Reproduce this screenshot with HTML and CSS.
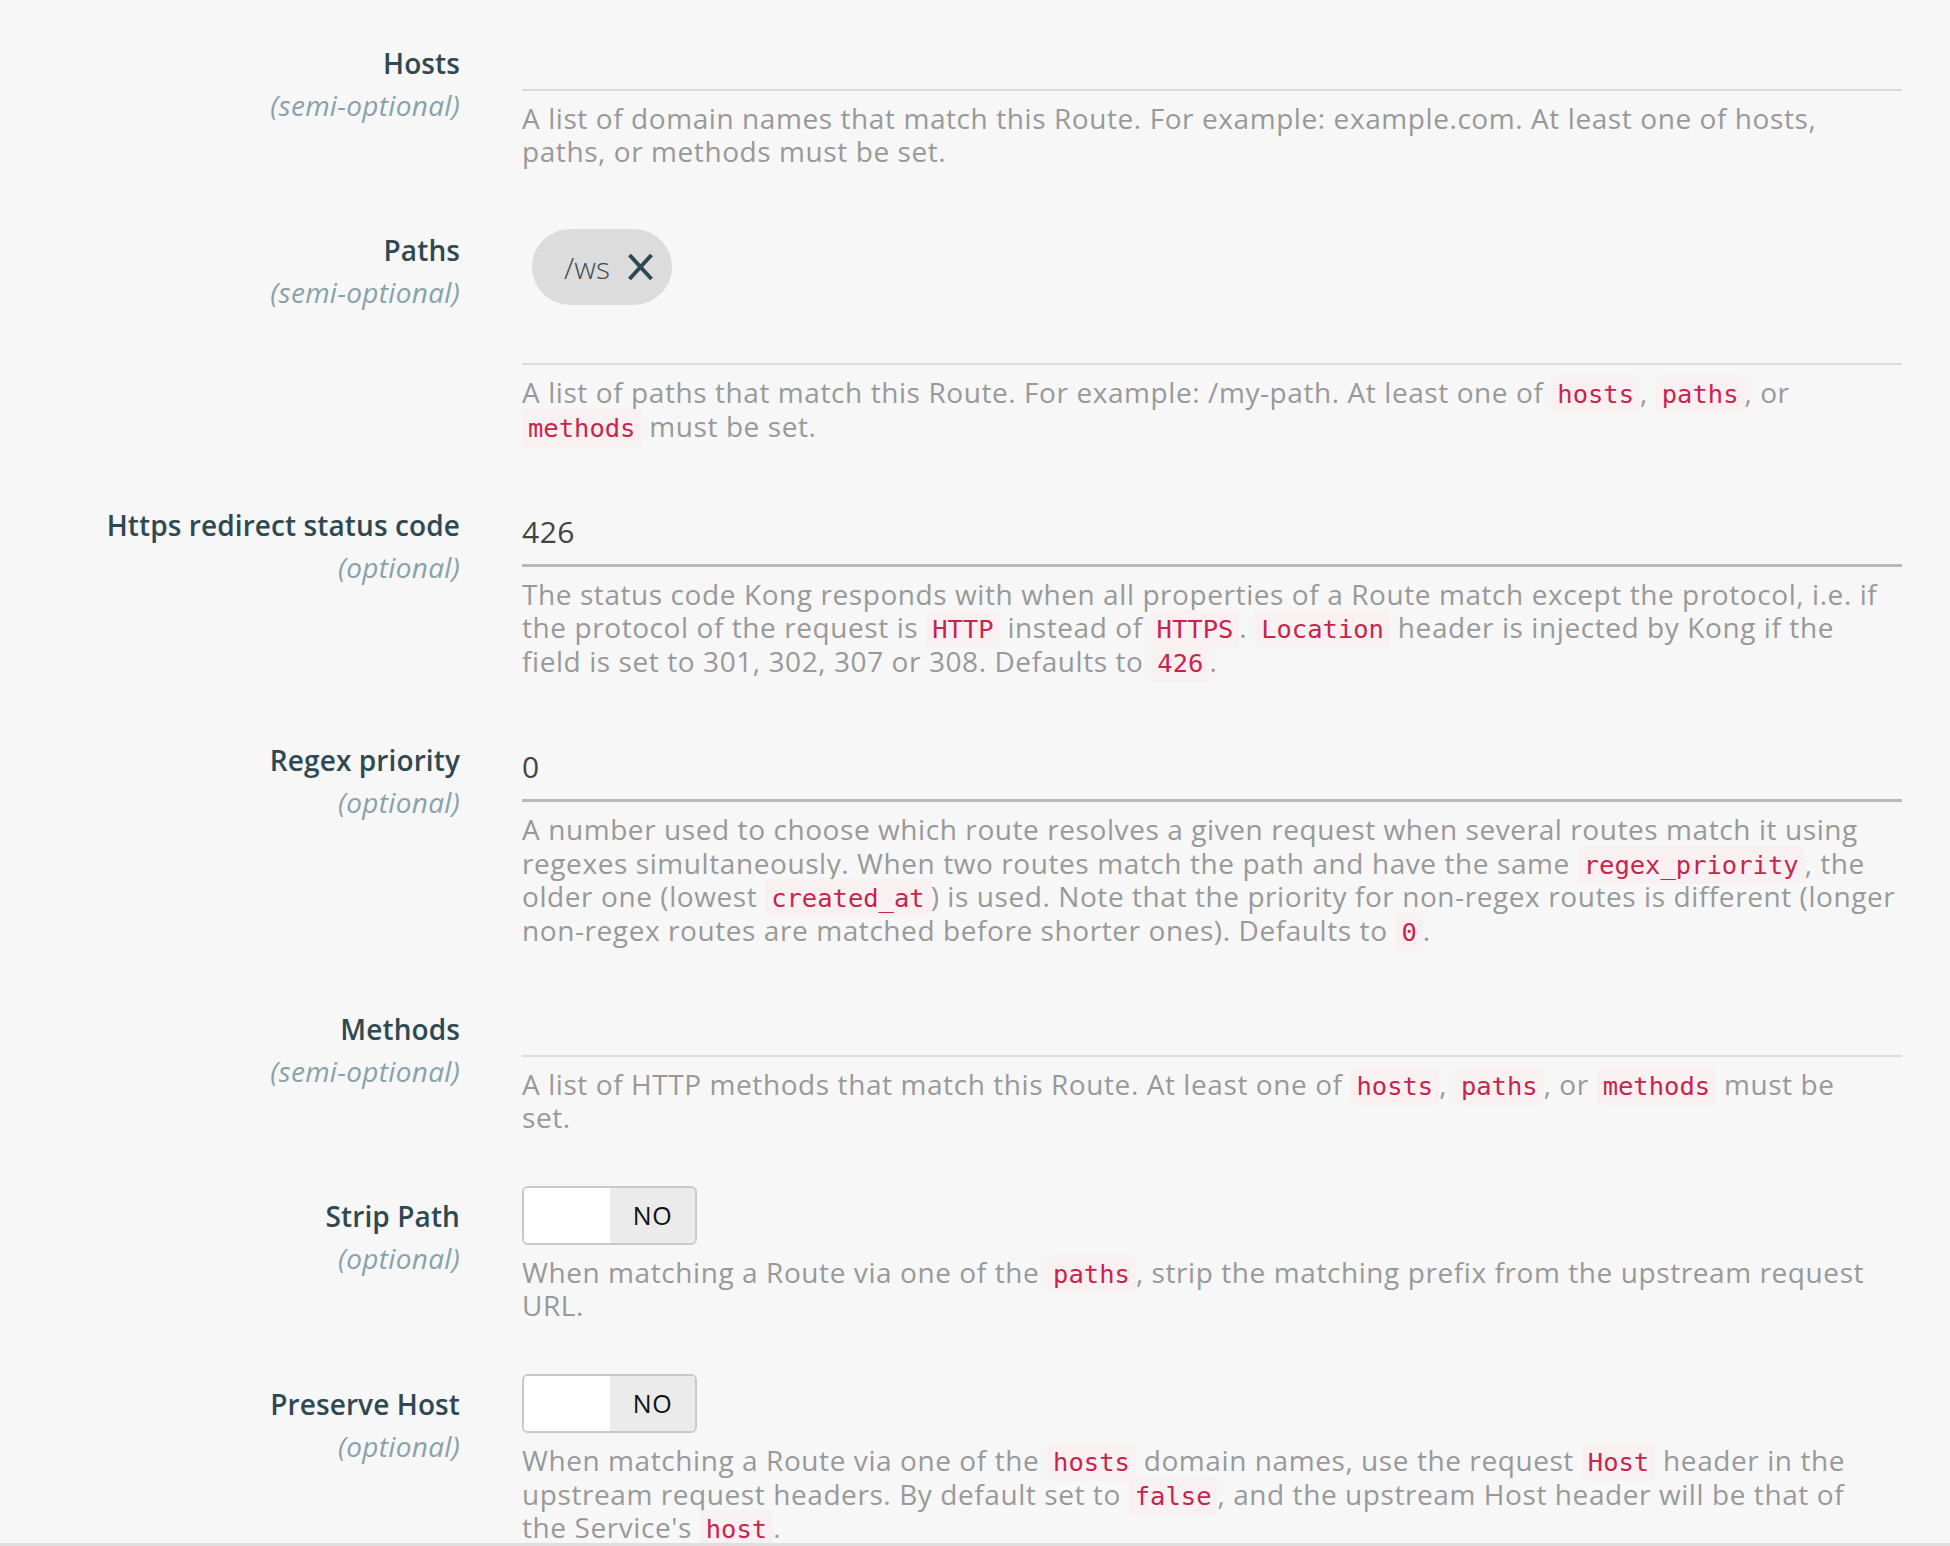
FILE: index.html
```html
<!DOCTYPE html>
<html lang="en">
  <head>
    <meta charset="UTF-8" />
    <meta name="viewport" content="width=device-width, initial-scale=1.0" />
    <title>Edit Route</title>
    <link rel="stylesheet" href="styles.css">
  </head>
  <body>
    <main class="form">
      <div class="field">
        <div class="field-label">
          <label>Hosts</label>
          <span class="hint">(semi-optional)</span>
        </div>
        <div class="field-body">
          <div class="tags"></div>
          <p class="help">A list of domain names that match this Route. For example: example.com. At least one of hosts, paths, or methods must be set.</p>
        </div>
      </div>

      <div class="field">
        <div class="field-label">
          <label>Paths</label>
          <span class="hint">(semi-optional)</span>
        </div>
        <div class="field-body">
          <div class="tags">
            <span class="tag">/ws
              <svg class="tag-remove" viewBox="0 0 28 28" width="29" height="28">
                <path d="M3 2 L25 26 M25 2 L3 26" />
              </svg>
            </span>
            <div class="tag-input"></div>
          </div>
          <p class="help">A list of paths that match this Route. For example: /my-path. At least one of <code>hosts</code>, <code>paths</code>, or <code>methods</code> must be set.</p>
        </div>
      </div>

      <div class="field">
        <div class="field-label">
          <label>Https redirect status code</label>
          <span class="hint">(optional)</span>
        </div>
        <div class="field-body">
          <input class="text-input" type="text" value="426" />
          <p class="help">The status code Kong responds with when all properties of a Route match except the protocol, i.e. if the protocol of the request is <code>HTTP</code> instead of <code>HTTPS</code>. <code>Location</code> header is injected by Kong if the<br>field is set to 301, 302, 307 or 308. Defaults to <code>426</code>.</p>
        </div>
      </div>

      <div class="field">
        <div class="field-label">
          <label>Regex priority</label>
          <span class="hint">(optional)</span>
        </div>
        <div class="field-body">
          <input class="text-input" type="text" value="0" />
          <p class="help">A number used to choose which route resolves a given request when several routes match it using regexes simultaneously. When two routes match the path and have the same <code>regex_priority</code>, the older one (lowest <code>created_at</code>) is used. Note that the priority for non-regex routes is different (longer non-regex routes are matched before shorter ones). Defaults to <code>0</code>.</p>
        </div>
      </div>

      <div class="field">
        <div class="field-label">
          <label>Methods</label>
          <span class="hint">(semi-optional)</span>
        </div>
        <div class="field-body">
          <div class="tags"></div>
          <p class="help">A list of HTTP methods that match this Route. At least one of <code>hosts</code>, <code>paths</code>, or <code>methods</code> must be<br>set.</p>
        </div>
      </div>

      <div class="field">
        <div class="field-label">
          <label>Strip Path</label>
          <span class="hint">(optional)</span>
        </div>
        <div class="field-body">
          <div class="toggle">
            <span class="toggle-knob"></span>
            <span class="toggle-state">NO</span>
          </div>
          <p class="help">When matching a Route via one of the <code>paths</code>, strip the matching prefix from the upstream request URL.</p>
        </div>
      </div>

      <div class="field">
        <div class="field-label">
          <label>Preserve Host</label>
          <span class="hint">(optional)</span>
        </div>
        <div class="field-body">
          <div class="toggle">
            <span class="toggle-knob"></span>
            <span class="toggle-state">NO</span>
          </div>
          <p class="help">When matching a Route via one of the <code>hosts</code> domain names, use the request <code>Host</code> header in the upstream request headers. By default set to <code>false</code>, and the upstream Host header will be that of<br>the Service's <code>host</code>.</p>
        </div>
      </div>
    </main>
    <div class="footer-bar"></div>
  </body>
</html>
```

FILE: styles.css
```css
body {
  margin: 0;
  font-family: "Open Sans", Arial, sans-serif;
  background-color: #f7f7f7;
  color: #999;
}
.form {
  padding-top: 32.5px;
}
.field {
  display: grid;
  grid-template-columns: 460px 1380px;
  column-gap: 62px;
  margin-bottom: 51px;
}
.field-label {
  display: flex;
  flex-direction: column;
  align-items: flex-end;
  padding-top: 10.5px;
  line-height: 40px;
}
.field-label label {
  font-size: 28px;
  font-weight: 600;
  letter-spacing: 0.1px;
  color: #2f4952;
}
.hint {
  margin-top: 2px;
  font-size: 28px;
  font-style: italic;
  letter-spacing: 0.3px;
  color: #87a2ab;
}
.field-body {
  min-width: 0;
}
.tags {
  min-height: 56px;
  border-bottom: 2px solid #dcdcdc;
}
.tag {
  display: inline-flex;
  align-items: center;
  gap: 16px;
  height: 76px;
  margin: 9.5px 0 0 10px;
  padding: 0 17px 0 32px;
  border-radius: 38px;
  background: #dcdcdc;
  font-size: 30px;
  font-weight: 300;
  color: #3d4d55;
}
.tag-remove path {
  stroke: #2f4952;
  stroke-width: 4;
  fill: none;
}
.tag-input {
  height: 58px;
}
.text-input {
  display: block;
  box-sizing: border-box;
  width: 100%;
  height: 63px;
  margin-top: 9.5px;
  padding: 0 0 5px 0;
  border: none;
  border-bottom: 3px solid #b9b9b9;
  background: transparent;
  font-family: inherit;
  font-size: 30px;
  letter-spacing: 0.5px;
  color: #444;
  outline: none;
}
.help {
  margin: 11px 0 0 0;
  font-size: 28px;
  line-height: 33.6px;
  letter-spacing: 0.58px;
}
code {
  font-family: "DejaVu Sans Mono", monospace;
  font-size: 25.5px;
  line-height: 1;
  letter-spacing: 0;
  padding: 4px 6px;
  border-radius: 4px;
  background: #f9f0f2;
  color: #c7254e;
}
.toggle {
  display: flex;
  width: 175px;
  height: 59px;
  box-sizing: border-box;
  border: 2px solid #c9c9c9;
  border-radius: 6px;
  overflow: hidden;
}
.toggle-knob {
  width: 86px;
  background: #fff;
}
.toggle-state {
  flex: 1;
  display: flex;
  align-items: center;
  justify-content: center;
  background: #ebebeb;
  font-size: 25px;
  letter-spacing: 0.5px;
  color: #111;
}
.footer-bar {
  position: fixed;
  left: 0;
  right: 0;
  bottom: 0;
  height: 3px;
  background: #dedede;
}
```
